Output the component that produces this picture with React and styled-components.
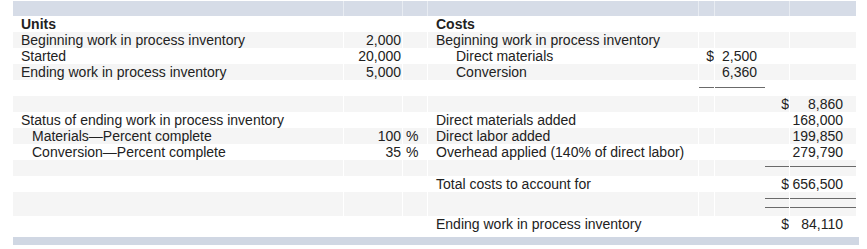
import React from "react";
import styled, { createGlobalStyle } from "styled-components";

const Global = createGlobalStyle`
  html, body { margin: 0; padding: 0; background: #ffffff; }
  body { font-family: "Liberation Sans", Arial, Helvetica, sans-serif; }
  * { box-sizing: border-box; }
`;

const COLS = "330px 59px 25px 271px 16px 75px 67px";

const Sheet = styled.div`
  padding: 1px 0 0 13px;
  width: 867px;
  color: #222222;
  font-size: 14px;
`;

const tones = {
  band: "#d6dce7",
  grey: "#f5f5f5",
  white: "#ffffff",
};

const Row = styled.div`
  display: grid;
  grid-template-columns: ${COLS};
  width: 843px;
  height: ${(p) => p.$h || 16}px;
  background: ${(p) => tones[p.$tone || "white"]};
  & > * + * {
    border-left: 1px solid
      ${(p) => (p.$tone === "band" ? "rgba(255,255,255,0.45)" : "#ffffff")};
  }
`;

const Spacer = styled.div`
  height: ${(p) => p.$h}px;
`;

const FooterBand = styled.div`
  width: 846px;
  height: 8px;
  background: #d0d7e3;
`;

const Cell = styled.div`
  line-height: 16px;
  white-space: nowrap;
  text-align: ${(p) => p.$align || "left"};
  padding-left: ${(p) => p.$pl || 0}px;
  padding-right: ${(p) => p.$pr || 0}px;
  font-weight: ${(p) => (p.$bold ? 700 : 400)};
`;

const Rule = styled.div`
  margin: ${(p) => p.$top}px ${(p) => p.$mr || 0}px 0 ${(p) => p.$ml || 0}px;
  height: ${(p) => (p.$double ? 10 : 1)}px;
  border-top: 1px solid #6a6a6a;
  border-bottom: ${(p) => (p.$double ? "1px solid #6a6a6a" : "none")};
`;

/* column-specific cells */
const Label = ({ children, indent, bold }) => (
  <Cell $pl={indent ? 19 : 8} $bold={bold}>
    {children}
  </Cell>
);
const Qty = ({ children }) => (
  <Cell $align="right" $pr={1}>
    {children}
  </Cell>
);
const Unit = ({ children }) => <Cell $pl={3}>{children}</Cell>;
const CostLabel = ({ children, indent, bold }) => (
  <Cell $pl={indent ? 28 : 8} $bold={bold}>
    {children}
  </Cell>
);
const Dollar = ({ children }) => (
  <Cell $align="right" $pr={0}>
    {children}
  </Cell>
);
const SubAmount = ({ children }) => (
  <Cell $align="right" $pr={32}>
    {children}
  </Cell>
);
const Amount = ({ children }) => (
  <Cell $align="right" $pr={13}>
    {children}
  </Cell>
);
const Empty = () => <Cell />;

export default function App() {
  return (
    <>
      <Global />
      <Sheet>
        <Row $tone="band" $h={15}>
          <Empty />
          <Empty />
          <Empty />
          <Empty />
          <Empty />
          <Empty />
          <Empty />
        </Row>

        <Row $tone="white">
          <Label bold>Units</Label>
          <Empty />
          <Empty />
          <CostLabel bold>Costs</CostLabel>
          <Empty />
          <Empty />
          <Empty />
        </Row>

        <Row $tone="grey">
          <Label>Beginning work in process inventory</Label>
          <Qty>2,000</Qty>
          <Empty />
          <CostLabel>Beginning work in process inventory</CostLabel>
          <Empty />
          <Empty />
          <Empty />
        </Row>

        <Row $tone="white">
          <Label>Started</Label>
          <Qty>20,000</Qty>
          <Empty />
          <CostLabel indent>Direct materials</CostLabel>
          <Dollar>$</Dollar>
          <SubAmount>2,500</SubAmount>
          <Empty />
        </Row>

        <Row $tone="grey">
          <Label>Ending work in process inventory</Label>
          <Qty>5,000</Qty>
          <Empty />
          <CostLabel indent>Conversion</CostLabel>
          <Empty />
          <SubAmount>6,360</SubAmount>
          <Empty />
        </Row>

        <Row $tone="white">
          <Empty />
          <Empty />
          <Empty />
          <Empty />
          <Cell>
            <Rule $top={7} />
          </Cell>
          <Cell>
            <Rule $top={7} $mr={24} />
          </Cell>
          <Empty />
        </Row>

        <Row $tone="grey">
          <Empty />
          <Empty />
          <Empty />
          <Empty />
          <Empty />
          <Dollar>$</Dollar>
          <Amount>8,860</Amount>
        </Row>

        <Row $tone="white">
          <Label>Status of ending work in process inventory</Label>
          <Empty />
          <Empty />
          <CostLabel>Direct materials added</CostLabel>
          <Empty />
          <Empty />
          <Amount>168,000</Amount>
        </Row>

        <Row $tone="grey">
          <Label indent>Materials—Percent complete</Label>
          <Qty>100</Qty>
          <Unit>%</Unit>
          <CostLabel>Direct labor added</CostLabel>
          <Empty />
          <Empty />
          <Amount>199,850</Amount>
        </Row>

        <Row $tone="white">
          <Label indent>Conversion—Percent complete</Label>
          <Qty>35</Qty>
          <Unit>%</Unit>
          <CostLabel>Overhead applied (140% of direct labor)</CostLabel>
          <Empty />
          <Empty />
          <Amount>279,790</Amount>
        </Row>

        <Row $tone="grey">
          <Empty />
          <Empty />
          <Empty />
          <Empty />
          <Empty />
          <Cell>
            <Rule $top={6} $ml={50} />
          </Cell>
          <Cell>
            <Rule $top={6} />
          </Cell>
        </Row>

        <Row $tone="white">
          <Empty />
          <Empty />
          <Empty />
          <CostLabel>Total costs to account for</CostLabel>
          <Empty />
          <Dollar>$</Dollar>
          <Amount>656,500</Amount>
        </Row>

        <Row $tone="grey" $h={24}>
          <Empty />
          <Empty />
          <Empty />
          <Empty />
          <Empty />
          <Cell>
            <Rule $top={6} $ml={50} $double />
          </Cell>
          <Cell>
            <Rule $top={6} $double />
          </Cell>
        </Row>

        <Row $tone="white">
          <Empty />
          <Empty />
          <Empty />
          <CostLabel>Ending work in process inventory</CostLabel>
          <Empty />
          <Dollar>$</Dollar>
          <Amount>84,110</Amount>
        </Row>

        <Spacer $h={5} />
        <FooterBand />
      </Sheet>
    </>
  );
}
